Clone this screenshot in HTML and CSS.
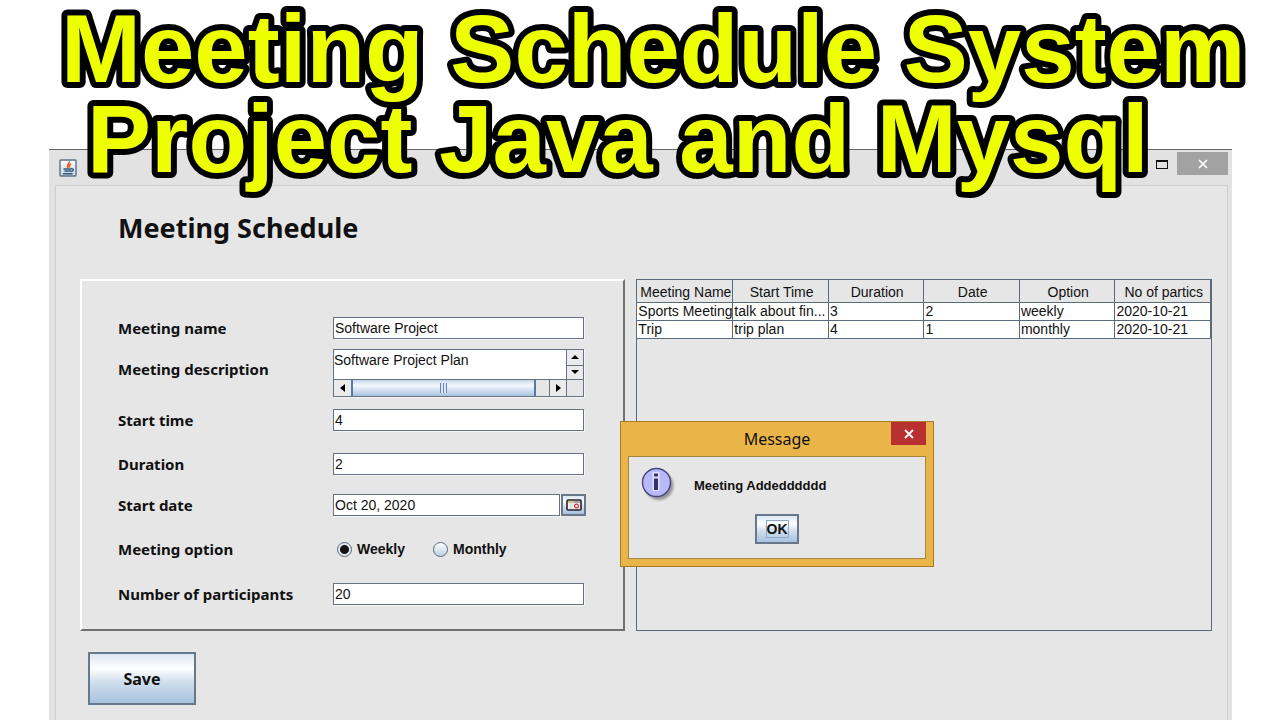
FILE: index.html
```html
<!DOCTYPE html>
<html lang="en">
 <head>
  <meta charset="utf-8">
  <title>Meeting Schedule System</title>
  <link rel="stylesheet" href="styles.css">
 </head>
 <body>
   <h1 class="banner">
     <svg width="1220" height="210">
       <text><tspan x="61" y="82">Meeting Schedule System</tspan><tspan x="87" y="172">Project Java and Mysql</tspan></text>
     </svg>
   </h1>

   <div class="window">
     <div class="titlebar">
       <svg class="java" width="18" height="18" viewBox="0 0 18 18">
         <defs>
           <linearGradient id="tile" x1="0" y1="0" x2="0" y2="1">
             <stop offset="0" stop-color="#fff"/>
             <stop offset="1" stop-color="#c3d2e0"/>
           </linearGradient>
         </defs>
         <rect x="1" y="1" width="16" height="16" rx="1" fill="url(#tile)" stroke="#5b7389" stroke-width="1.4"/>
         <path d="M10 2.500c1.500 2.200-3.600 3-.8 6.500M12.200 5c-2.600 1-2 2-1.200 3.600" fill="none" stroke="#e0602a" stroke-width="1.6"/>
         <path d="M4.500 10h8M5.500 12h6.500M4 14.800h9.500M12.500 9.800c2.800-.4 2.200 2.400-.4 2.700" fill="none" stroke="#35587c" stroke-width="1.4"/>
       </svg>
       <div class="controls">
         <button class="maximize" type="button" aria-label="Maximize"></button>
         <button class="close" type="button" aria-label="Close window">
           <svg width="10" height="10" viewBox="0 0 10 10"><path d="M1 1l8 8M9 1l-8 8" stroke="#fff" stroke-width="1.7"/></svg>
         </button>
       </div>
     </div>

     <div class="content">
       <h2>Meeting Schedule</h2>
       <div class="columns">
         <form class="panel" id="meeting">
           <label for="name">Meeting name</label>
           <input class="field" id="name" type="text" value="Software Project">

           <label class="raised" for="description">Meeting description</label>
           <div class="scroller">
             <textarea id="description" wrap="off">Software Project Plan</textarea>
             <div class="vbar">
               <button type="button" aria-label="Scroll up"><svg width="8" height="4" viewBox="0 0 8 4"><path d="M0 4l4-4 4 4z"/></svg></button>
               <button type="button" aria-label="Scroll down"><svg width="8" height="4" viewBox="0 0 8 4"><path d="M0 0l4 4 4-4z"/></svg></button>
             </div>
             <div class="hbar">
               <button type="button" aria-label="Scroll left"><svg width="5" height="8" viewBox="0 0 5 8"><path d="M5 0L0 4l5 4z"/></svg></button>
               <div class="track"><div class="thumb"></div></div>
               <button class="right" type="button" aria-label="Scroll right"><svg width="5" height="8" viewBox="0 0 5 8"><path d="M0 0l5 4-5 4z"/></svg></button>
             </div>
             <div class="corner"></div>
           </div>

           <label for="start">Start time</label>
           <input class="field" id="start" type="text" value="4">

           <label for="duration">Duration</label>
           <input class="field" id="duration" type="text" value="2">

           <label for="date">Start date</label>
           <div class="date">
             <input class="field" id="date" type="text" value="Oct 20, 2020">
             <button class="metal" type="button" aria-label="Choose date">
               <svg width="16" height="12" viewBox="0 0 16 12">
                 <rect x="1" y="1" width="14" height="10" rx="1" fill="#f4efec" stroke="#222" stroke-width="1.6"/>
                 <path d="M2 3h6" stroke="#d5b27a" stroke-width="1.6"/>
                 <path d="M8 3h6" stroke="#8a9099" stroke-width="1.6"/>
                 <path d="M5 4v6" stroke="#ccc"/>
                 <circle cx="10.5" cy="7" r="1.9" fill="#fff" stroke="#d8323c" stroke-width="1.3"/>
               </svg>
             </button>
           </div>

           <span class="caption" id="option">Meeting option</span>
           <div class="options" role="radiogroup" aria-labelledby="option">
             <label class="radio"><input type="radio" name="option" checked>Weekly</label>
             <label class="radio"><input type="radio" name="option">Monthly</label>
           </div>

           <label for="participants">Number of participants</label>
           <input class="field" id="participants" type="text" value="20">
         </form>

         <div class="listing">
           <table>
             <thead>
               <tr><th>Meeting Name</th><th>Start Time</th><th>Duration</th><th>Date</th><th>Option</th><th>No of partics</th></tr>
             </thead>
             <tbody>
               <tr><td>Sports Meeting</td><td>talk about fin...</td><td>3</td><td>2</td><td>weekly</td><td>2020-10-21</td></tr>
               <tr><td>Trip</td><td>trip plan</td><td>4</td><td>1</td><td>monthly</td><td>2020-10-21</td></tr>
             </tbody>
           </table>
         </div>
       </div>
       <button class="metal save" type="submit" form="meeting">Save</button>
     </div>
   </div>

   <div class="dialog" role="dialog" aria-labelledby="dialog-title">
     <div class="dialog-bar">
       <span class="dialog-title" id="dialog-title">Message</span>
       <button class="dialog-close" type="button" aria-label="Close message">
         <svg width="10" height="10" viewBox="0 0 10 10"><path d="M1 1l8 8M9 1l-8 8" stroke="#fff" stroke-width="1.8"/></svg>
       </button>
     </div>
     <div class="dialog-body">
       <div class="message">
         <svg width="36" height="36" viewBox="0 0 36 36">
           <defs>
             <filter id="soft" x="-20%" y="-20%" width="140%" height="140%"><feGaussianBlur stdDeviation="1.3"/></filter>
           </defs>
           <circle cx="18" cy="18.5" r="14.5" fill="#777" opacity=".7" filter="url(#soft)"/>
           <circle cx="15.5" cy="15.5" r="14" fill="#b8b8fb" stroke="#45457a" stroke-width="1.4"/>
           <path d="M11.500 5h7v5.500h-7zM11.500 10h7v14h-7z" fill="#e2e2ff"/>
           <path d="M13 6.500h4v3h-4zM13 11.500h4v11.500h-4z" fill="#333366"/>
         </svg>
         <p>Meeting Addedddddd</p>
       </div>
       <button class="metal ok" type="button"><span>OK</span></button>
     </div>
   </div>
 </body>
</html>
```
FILE: styles.css
```css
* { box-sizing: border-box; }
body
{
 margin: 0;
 min-height: 100vh;
 display: flex;
 position: relative;
 overflow: hidden;
 background-color: white;
 color: #111;
 font: 14px/18px "Liberation Sans", Arial, sans-serif;
}
h1, h2, p { margin: 0; }
button { padding: 0; border: 0; font: inherit; color: inherit; }
svg { display: block; }

/* yellow lettering over the top of the window */
.banner
{
 position: absolute;
 top: 0;
 left: 0;
 z-index: 1;
 pointer-events: none;
}
.banner svg { overflow: visible; }
.banner text
{
 fill: #eeff00;
 stroke: black;
 stroke-width: 12px;
 stroke-linejoin: round;
 paint-order: stroke;
 font: bold 96px "Liberation Sans", Arial, sans-serif;
}

.window
{
 flex: 1;
 display: flex;
 flex-direction: column;
 margin: 149px 48px 0 49px;
 padding: 0 4px 0 6px;
 border-top: 1px solid #666;
 background-color: #e2e2e2;
}
.titlebar { display: flex; justify-content: space-between; height: 35px; }
.java { margin: 9px 0 0 4px; }
.controls { display: flex; align-items: flex-start; gap: 9px; padding-top: 2px; }
.maximize
{
 width: 12px;
 height: 9px;
 margin-top: 8px;
 border: 1px solid #111;
 border-top-width: 2px;
 background: none;
}
.close
{
 display: grid;
 place-items: center;
 width: 51px;
 height: 23px;
 background-color: #a2a2a2;
}
.content
{
 flex: 1;
 padding: 24px 15px 14px 24px;
 border: 1px solid #cecece;
 border-bottom: 0;
 background-color: #e6e6e6;
}
h2
{
 padding-left: 38px;
 font: bold 27px/36px "Noto Sans", Tahoma, sans-serif;
}
.columns
{
 display: grid;
 grid-template-columns: minmax(0, 18fr) minmax(0, 19fr);
 gap: 11px;
 margin-top: 33px;
}

.panel
{
 display: grid;
 grid-template-columns: 215px minmax(0, 1fr);
 grid-template-rows: 42px 48px 46px 42px 40px 48px 42px;
 align-items: center;
 padding: 26px 39px 14px 36px;
 border: 2px solid white;
 border-right-color: #707070;
 border-bottom-color: #707070;
}
.panel > label, .caption { font: bold 15px/20px "Noto Sans", Tahoma, sans-serif; }
.panel > .raised { padding-bottom: 8px; }
.field
{
 width: 100%;
 min-width: 0;
 height: 22px;
 padding: 0 1px;
 border: 1px solid #66727f;
 background-color: white;
 box-shadow: 1px 1px #f6f6f6;
 color: inherit;
 font: inherit;
}

.scroller
{
 display: grid;
 grid-template: 29px 17px / minmax(0, 1fr) 17px;
 border: 1px solid #66727f;
 box-shadow: 1px 1px #f6f6f6;
}
textarea
{
 width: 100%;
 height: 29px;
 padding: 1px 0;
 border: 0;
 overflow: hidden;
 resize: none;
 background-color: white;
 color: inherit;
 font: inherit;
}
.vbar { display: grid; grid-template-rows: 1fr 1fr; border-left: 1px solid #66727f; }
.vbar button, .hbar button { display: grid; place-items: center; background-color: #ebebeb; }
.vbar button + button { border-top: 1px solid #66727f; }
.hbar { display: flex; border-top: 1px solid #66727f; }
.hbar button { width: 17px; }
.hbar .right { border-left: 1px solid #66727f; }
.track { flex: 1; padding-right: 13px; }
.thumb
{
 height: 100%;
 border: 1px solid #5878a8;
 border-width: 0 2px;
 background:
  repeating-linear-gradient(90deg, #6382bf 0 1px, #dfe9f5 1px 3px) center / 7px 10px no-repeat,
  linear-gradient(#c6d8ec, #f4f8fd 35%, #a9c2e0);
}
.corner { border-top: 1px solid #66727f; border-left: 1px solid #66727f; }

.metal
{
 border: 2px solid #66788a;
 background: linear-gradient(#dbe6f2, #fff 30%, #d3e0ee 55%, #a7c2df);
}
.date { display: flex; gap: 1px; margin-right: -2px; }
.date button { flex: none; display: grid; place-items: center; width: 25px; height: 22px; }
.options { display: flex; gap: 28px; padding-left: 4px; }
.radio { display: flex; align-items: center; gap: 5px; font-weight: bold; }
.radio input
{
 appearance: none;
 width: 15px;
 height: 15px;
 margin: 0;
 border: 1px solid #5a6877;
 border-radius: 50%;
 background: linear-gradient(#fff, #b9cfe6);
}
.radio input:checked { background: radial-gradient(circle, #111 4px, #dfe8f1 5px); }

.listing { border: 1px solid #5c6b7b; }
table { width: 100%; table-layout: fixed; border-collapse: collapse; }
th, td
{
 border: 1px solid #5c6b7b;
 border-top: 0;
 border-left: 0;
 line-height: 17px;
 white-space: nowrap;
}
th { height: 22px; padding: 3px 0 0 2px; font-weight: normal; }
td { height: 18px; padding: 0 0 0 1px; background-color: white; }

.save
{
 display: block;
 width: 108px;
 height: 53px;
 margin: 21px 0 0 8px;
 font: bold 16px/20px "Noto Sans", Tahoma, sans-serif;
}

/* message box on top of everything */
.dialog
{
 position: absolute;
 top: 421px;
 left: 620px;
 width: 314px;
 padding: 0 7px 7px;
 border: 1px solid #a87c24;
 background-color: #eab548;
}
.dialog-bar { display: grid; grid-template-columns: 35px 1fr 35px; height: 34px; }
.dialog-title
{
 grid-column: 2;
 font: 16px/34px "Noto Sans", "Segoe UI", sans-serif;
 text-align: center;
}
.dialog-close
{
 display: grid;
 place-items: center;
 height: 23px;
 background-color: #b93030;
}
.dialog-body
{
 padding: 10px 12px 14px;
 border: 1px solid #a5853f;
 background-color: #e6e6e6;
}
.message { display: flex; gap: 17px; font-size: 13px; font-weight: bold; }
.message p { padding-top: 10px; }
.ok { display: block; width: 44px; height: 30px; margin: 11px auto 0; font-weight: bold; }
.ok span { border: 1px solid #8fa8c4; }
```
